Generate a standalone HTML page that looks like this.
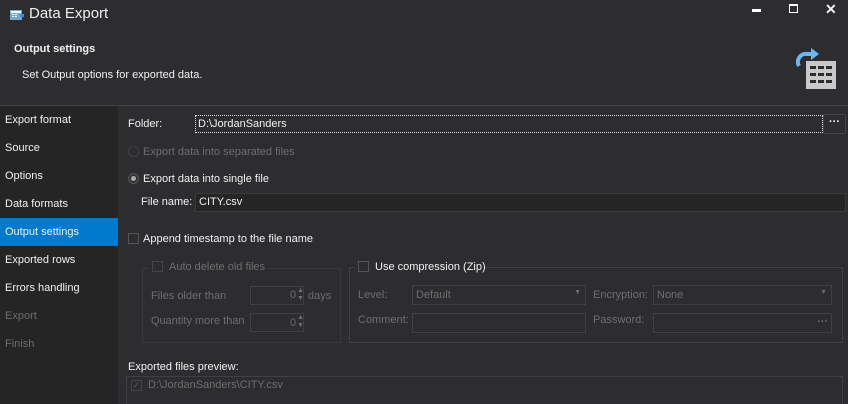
<!DOCTYPE html>
<html><head><style>
*{margin:0;padding:0;box-sizing:border-box}
html,body{width:848px;height:404px;overflow:hidden}
body{background:#2d2d30;font-family:"Liberation Sans",sans-serif;font-size:11px;color:#f1f1f1;position:relative}
.a{position:absolute;white-space:nowrap}
.d{color:#6d6d6d}
.sb{position:absolute;left:0;top:106px;width:118px;height:298px;background:#252526}
.it{position:absolute;left:5px;height:28px;line-height:28px;width:113px}
.box{position:absolute;border:1px solid #3f3f46}
.cb{position:absolute;width:11px;height:11px;border:1px solid #555;background:#2d2d30}
.cbd{border-color:#444}
</style></head><body>
<svg class="a" style="left:10px;top:9px" width="14" height="12"><rect x="0" y="1" width="12" height="10" fill="#6fa8dc"/><rect x="1" y="2" width="10" height="2" fill="#fff"/><g fill="#fff"><rect x="2" y="5" width="2" height="1"/><rect x="5" y="5" width="2" height="1"/><rect x="2" y="7" width="2" height="1"/><rect x="5" y="7" width="2" height="1"/></g><rect x="10" y="5" width="4" height="3" fill="#3d8fd8"/></svg>
<div class="a" style="left:29px;top:5px;font-size:15px;color:#eee">Data Export</div>
<div class="a" style="left:752px;top:9px;width:9px;height:3px;background:#fff"></div>
<div class="a" style="left:789px;top:4px;width:9px;height:9px;border:1px solid #fff;border-top-width:2px"></div>
<div class="a" style="left:825px;top:1px;font-size:14px;font-weight:bold">✕</div>
<div class="a" style="left:14px;top:43px;font-weight:bold;font-size:11px">Output settings</div>
<div class="a" style="left:22px;top:69px">Set Output options for exported data.</div>
<svg class="a" style="left:793px;top:48px" width="44" height="42"><path d="M6 18 A8 8 0 0 1 14 6 L20 6" stroke="#6ab7f5" stroke-width="4" fill="none"/><path d="M18 0 L26 6 L18 12Z" fill="#6ab7f5"/><rect x="13" y="13" width="30" height="28" fill="#c8c8c8"/><g fill="#2d2d30"><rect x="17" y="18" width="6" height="3"/><rect x="25" y="18" width="6" height="3"/><rect x="33" y="18" width="6" height="3"/><rect x="17" y="25" width="6" height="3"/><rect x="25" y="25" width="6" height="3"/><rect x="33" y="25" width="6" height="3"/><rect x="17" y="32" width="6" height="3"/><rect x="25" y="32" width="6" height="3"/><rect x="33" y="32" width="6" height="3"/></g></svg>
<div class="a" style="left:0;top:105px;width:848px;height:1px;background:#434346"></div>
<div class="sb"></div>
<div class="it a" style="top:106px">Export format</div>
<div class="it a" style="top:134px">Source</div>
<div class="it a" style="top:162px">Options</div>
<div class="it a" style="top:190px">Data formats</div>
<div class="a" style="left:0;top:218px;width:118px;height:28px;background:#007acc"></div>
<div class="it a" style="top:218px">Output settings</div>
<div class="it a" style="top:246px">Exported rows</div>
<div class="it a" style="top:274px">Errors handling</div>
<div class="it a d" style="top:302px">Export</div>
<div class="it a d" style="top:330px">Finish</div>

<div class="a" style="left:128px;top:118px">Folder:</div>
<div class="a" style="left:195px;top:115px;width:628px;height:18px;border:1px dotted #ddd;padding:1px 2px;line-height:14px">D:\JordanSanders</div>
<div class="a" style="left:823px;top:114px;width:23px;height:20px;border:1px solid #434346;font-weight:bold;text-align:center;line-height:14px">···</div>
<div class="a" style="left:128px;top:146px;width:11px;height:11px;border-radius:50%;border:1px solid #3f3f46"></div>
<div class="a d" style="left:143px;top:146px">Export data into separated files</div>
<div class="a" style="left:128px;top:173px;width:11px;height:11px;border-radius:50%;border:1px solid #555;background:#333"><div style="margin:2px;width:5px;height:5px;border-radius:50%;background:#aaa"></div></div>
<div class="a" style="left:143px;top:173px">Export data into single file</div>
<div class="a" style="left:141px;top:196px">File name:</div>
<div class="a" style="left:195px;top:193px;width:651px;height:19px;background:#252526;border:1px solid #3a3a3d;padding:2px 3px">CITY.csv</div>
<div class="cb" style="left:128px;top:233px"></div>
<div class="a" style="left:143px;top:233px">Append timestamp to the file name</div>

<div class="box" style="left:142px;top:268px;width:199px;height:75px;border-color:#38383b"></div>
<div class="a" style="left:149px;top:261px;width:118px;height:14px;background:#2d2d30"></div>
<div class="cb cbd" style="left:152px;top:261px"></div>
<div class="a d" style="left:169px;top:261px">Auto delete old files</div>
<div class="a d" style="left:151px;top:290px">Files older than</div>
<div class="box" style="left:250px;top:286px;width:54px;height:19px"></div>
<div class="a d" style="left:290px;top:289px">0</div>
<div class="a d" style="left:297px;top:287px;font-size:7px;line-height:8px">▲<br>▼</div>
<div class="a d" style="left:308px;top:290px">days</div>
<div class="a d" style="left:151px;top:315px">Quantity more than</div>
<div class="box" style="left:250px;top:313px;width:54px;height:19px"></div>
<div class="a d" style="left:290px;top:317px">0</div>
<div class="a d" style="left:297px;top:314px;font-size:7px;line-height:8px">▲<br>▼</div>

<div class="box" style="left:349px;top:267px;width:494px;height:76px"></div>
<div class="a" style="left:355px;top:260px;width:130px;height:14px;background:#2d2d30"></div>
<div class="cb" style="left:358px;top:261px"></div>
<div class="a" style="left:375px;top:261px">Use compression (Zip)</div>
<div class="a d" style="left:358px;top:289px">Level:</div>
<div class="box" style="left:412px;top:285px;width:174px;height:20px;padding:3px 3px;color:#6d6d6d">Default<span style="position:absolute;right:4px;top:3px;font-size:7px">▼</span></div>
<div class="a d" style="left:593px;top:289px">Encryption:</div>
<div class="box" style="left:653px;top:285px;width:179px;height:20px;padding:3px 3px;color:#6d6d6d">None<span style="position:absolute;right:4px;top:3px;font-size:7px">▼</span></div>
<div class="a d" style="left:358px;top:314px">Comment:</div>
<div class="box" style="left:412px;top:313px;width:174px;height:20px"></div>
<div class="a d" style="left:593px;top:314px">Password:</div>
<div class="box" style="left:653px;top:313px;width:179px;height:20px;color:#6d6d6d;text-align:right;padding-right:3px;font-weight:bold;line-height:16px">···</div>

<div class="a" style="left:128px;top:361px">Exported files preview:</div>
<div class="box" style="left:126px;top:376px;width:717px;height:28px;border-bottom:none"></div>
<div class="cb cbd" style="left:131px;top:380px;font-size:9px;color:#555;line-height:9px;text-align:center">✓</div>
<div class="a d" style="left:148px;top:379px">D:\JordanSanders\CITY.csv</div>
</body></html>
